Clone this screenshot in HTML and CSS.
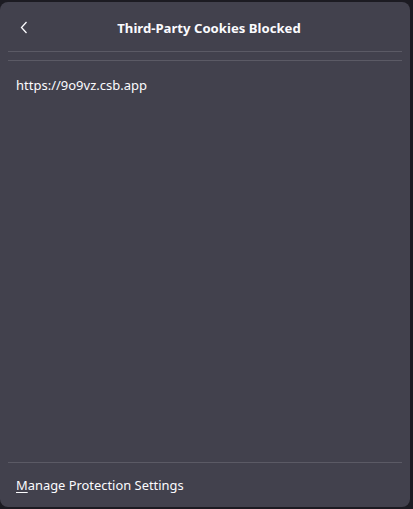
FILE: index.html
```html
<!DOCTYPE html>
<html lang="en">
<head>
<meta charset="utf-8">
<title>Third-Party Cookies Blocked</title>
<link rel="stylesheet" href="styles.css">
</head>
<body>
<div class="panel">
  <div class="header">
    <button class="back" aria-label="Back">
      <svg width="8" height="13" viewBox="0 0 8 13"><path d="M6.5 1 L1.5 6.5 L6.5 12" fill="none" stroke="#fbfbfe" stroke-width="1.3"/></svg>
    </button>
    <h1 class="title">Third-Party Cookies Blocked</h1>
    <span class="spacer"></span>
  </div>
  <div class="sep"></div>
  <div class="sep sep-second"></div>
  <ul class="list">
    <li class="item">https://9o9vz.csb.app</li>
  </ul>
  <div class="sep"></div>
  <div class="footer">
    <span class="link"><u>M</u>anage Protection Settings</span>
  </div>
</div>
</body>
</html>
```
FILE: styles.css
```css
html, body {
  margin: 0;
  padding: 0;
  background: #1c1b22;
  width: 413px;
  height: 509px;
  overflow: hidden;
  font-family: "Noto Sans", "Open Sans", sans-serif;
  color: #fbfbfe;
}
.panel {
  margin-top: 2px;
  width: 410px;
  height: 505px;
  background: #42414d;
  border-radius: 8px;
  display: flex;
  flex-direction: column;
  box-sizing: border-box;
}
.header {
  height: 49px;
  box-sizing: border-box;
  padding: 2px 8px 0;
  display: flex;
  align-items: center;
}
.back {
  width: 32px;
  height: 32px;
  border: 0;
  background: transparent;
  padding: 0;
  display: flex;
  align-items: center;
  justify-content: center;
}
.spacer { width: 24px; }
.title {
  flex: 1;
  margin: 0;
  text-align: center;
  font-size: 13.15px;
  font-weight: 700;
}
.sep {
  height: 1px;
  background: #5b5a65;
  margin: 0 8px;
}
.sep-second { margin-top: 8px; }
.list {
  flex: 1;
  list-style: none;
  margin: 0;
  padding: 15px 16px;
}
.item {
  font-size: 13px;
  line-height: 18px;
}
.footer {
  height: 44px;
  display: flex;
  align-items: center;
  padding: 0 16px;
  font-size: 12.9px;
}
.link u { text-underline-offset: 2px; }
```
